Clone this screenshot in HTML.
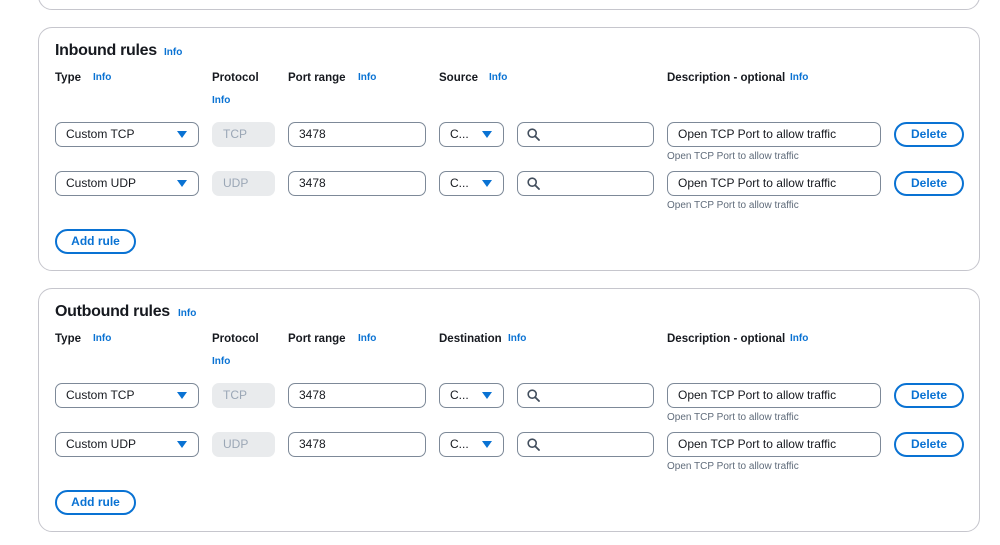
<!DOCTYPE html>
<html><head><meta charset="utf-8"><style>
*{box-sizing:border-box;margin:0;padding:0}
body{width:1000px;height:545px;background:#fff;font-family:"Liberation Sans",Arial,sans-serif;color:#16191f;position:relative;overflow:hidden}
.panel{position:absolute;left:38px;width:942px;border:1px solid #c6c6cd;border-radius:14px;background:#fff}
.a{position:absolute;white-space:nowrap}
.t{font-size:16px;font-weight:bold;line-height:20px;letter-spacing:-0.3px}
.h{font-size:11.5px;font-weight:bold;line-height:14px}
.i{font-size:10px;font-weight:bold;color:#0972d3;line-height:14px}
.box{position:absolute;height:25px;border:1.5px solid #7d8998;border-radius:7px;font-size:12px;line-height:22px;padding-left:10px}
.dis{background:#e9ebed;border-color:#e9ebed;color:#9ba7b6}
.tri{position:absolute;right:11px;top:8px;width:0;height:0;border-left:5px solid transparent;border-right:5px solid transparent;border-top:7px solid #0972d3}
.btn{position:absolute;height:25px;border:2px solid #0972d3;border-radius:14px;color:#0972d3;font-size:12px;font-weight:bold;text-align:center;line-height:21px}
.sub{font-size:10px;color:#5f6b7a;line-height:12px}
</style></head><body>
<div class="panel" style="top:-20px;height:30px"></div>

<div class="panel" style="top:27px;height:244px">
 <div class="a t" style="left:16px;top:13px">Inbound rules</div><div class="a i" style="left:125px;top:18px">Info</div>
 <div class="a h" style="left:16px;top:43px">Type</div><div class="a i" style="left:54px;top:43px">Info</div>
 <div class="a h" style="left:173px;top:43px">Protocol</div><div class="a i" style="left:173px;top:66px">Info</div>
 <div class="a h" style="left:249px;top:43px">Port range</div><div class="a i" style="left:319px;top:43px">Info</div>
 <div class="a h" style="left:400px;top:43px">Source</div><div class="a i" style="left:450px;top:43px">Info</div>
 <div class="a h" style="left:628px;top:43px">Description - optional</div><div class="a i" style="left:751px;top:43px">Info</div>

 <div class="box" style="left:16px;top:94px;width:144px">Custom TCP<span class="tri"></span></div>
 <div class="box dis" style="left:173px;top:94px;width:63px">TCP</div>
 <div class="box" style="left:249px;top:94px;width:138px">3478</div>
 <div class="box" style="left:400px;top:94px;width:65px">C...<span class="tri"></span></div>
 <div class="box" style="left:478px;top:94px;width:137px"><svg style="position:absolute;left:9px;top:5px" width="13" height="13" viewBox="0 0 13 13"><circle cx="5.2" cy="5.2" r="4" fill="none" stroke="#414d5c" stroke-width="1.6"/><path d="M8.2 8.2L12 12" stroke="#414d5c" stroke-width="1.8" stroke-linecap="round"/></svg></div>
 <div class="box" style="left:628px;top:94px;width:214px">Open TCP Port to allow traffic</div>
 <div class="btn" style="left:855px;top:94px;width:70px">Delete</div>
 <div class="a sub" style="left:628px;top:123px">Open TCP Port to allow traffic</div>

 <div class="box" style="left:16px;top:143px;width:144px">Custom UDP<span class="tri"></span></div>
 <div class="box dis" style="left:173px;top:143px;width:63px">UDP</div>
 <div class="box" style="left:249px;top:143px;width:138px">3478</div>
 <div class="box" style="left:400px;top:143px;width:65px">C...<span class="tri"></span></div>
 <div class="box" style="left:478px;top:143px;width:137px"><svg style="position:absolute;left:9px;top:5px" width="13" height="13" viewBox="0 0 13 13"><circle cx="5.2" cy="5.2" r="4" fill="none" stroke="#414d5c" stroke-width="1.6"/><path d="M8.2 8.2L12 12" stroke="#414d5c" stroke-width="1.8" stroke-linecap="round"/></svg></div>
 <div class="box" style="left:628px;top:143px;width:214px">Open TCP Port to allow traffic</div>
 <div class="btn" style="left:855px;top:143px;width:70px">Delete</div>
 <div class="a sub" style="left:628px;top:172px">Open TCP Port to allow traffic</div>

 <div class="btn" style="left:16px;top:201px;width:81px">Add rule</div>
</div>

<div class="panel" style="top:288px;height:244px">
 <div class="a t" style="left:16px;top:13px">Outbound rules</div><div class="a i" style="left:139px;top:18px">Info</div>
 <div class="a h" style="left:16px;top:43px">Type</div><div class="a i" style="left:54px;top:43px">Info</div>
 <div class="a h" style="left:173px;top:43px">Protocol</div><div class="a i" style="left:173px;top:66px">Info</div>
 <div class="a h" style="left:249px;top:43px">Port range</div><div class="a i" style="left:319px;top:43px">Info</div>
 <div class="a h" style="left:400px;top:43px">Destination</div><div class="a i" style="left:469px;top:43px">Info</div>
 <div class="a h" style="left:628px;top:43px">Description - optional</div><div class="a i" style="left:751px;top:43px">Info</div>

 <div class="box" style="left:16px;top:94px;width:144px">Custom TCP<span class="tri"></span></div>
 <div class="box dis" style="left:173px;top:94px;width:63px">TCP</div>
 <div class="box" style="left:249px;top:94px;width:138px">3478</div>
 <div class="box" style="left:400px;top:94px;width:65px">C...<span class="tri"></span></div>
 <div class="box" style="left:478px;top:94px;width:137px"><svg style="position:absolute;left:9px;top:5px" width="13" height="13" viewBox="0 0 13 13"><circle cx="5.2" cy="5.2" r="4" fill="none" stroke="#414d5c" stroke-width="1.6"/><path d="M8.2 8.2L12 12" stroke="#414d5c" stroke-width="1.8" stroke-linecap="round"/></svg></div>
 <div class="box" style="left:628px;top:94px;width:214px">Open TCP Port to allow traffic</div>
 <div class="btn" style="left:855px;top:94px;width:70px">Delete</div>
 <div class="a sub" style="left:628px;top:123px">Open TCP Port to allow traffic</div>

 <div class="box" style="left:16px;top:143px;width:144px">Custom UDP<span class="tri"></span></div>
 <div class="box dis" style="left:173px;top:143px;width:63px">UDP</div>
 <div class="box" style="left:249px;top:143px;width:138px">3478</div>
 <div class="box" style="left:400px;top:143px;width:65px">C...<span class="tri"></span></div>
 <div class="box" style="left:478px;top:143px;width:137px"><svg style="position:absolute;left:9px;top:5px" width="13" height="13" viewBox="0 0 13 13"><circle cx="5.2" cy="5.2" r="4" fill="none" stroke="#414d5c" stroke-width="1.6"/><path d="M8.2 8.2L12 12" stroke="#414d5c" stroke-width="1.8" stroke-linecap="round"/></svg></div>
 <div class="box" style="left:628px;top:143px;width:214px">Open TCP Port to allow traffic</div>
 <div class="btn" style="left:855px;top:143px;width:70px">Delete</div>
 <div class="a sub" style="left:628px;top:172px">Open TCP Port to allow traffic</div>

 <div class="btn" style="left:16px;top:201px;width:81px">Add rule</div>
</div>
</body></html>
